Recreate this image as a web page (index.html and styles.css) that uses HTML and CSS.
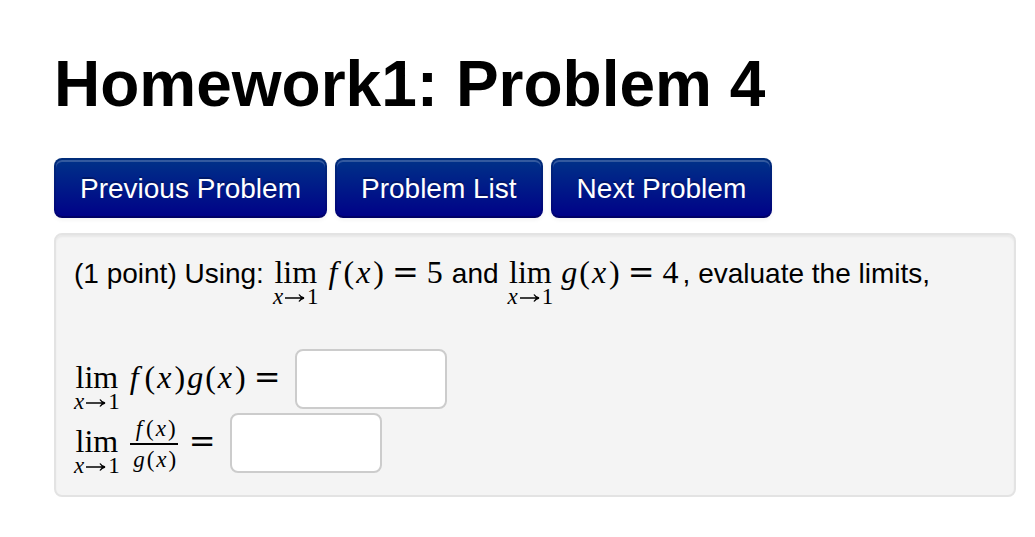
FILE: index.html
```html
<!DOCTYPE html>
<html lang="en">
<head>
<meta charset="utf-8">
<title>Homework1: Problem 4</title>
<link rel="stylesheet" href="styles.css">
</head>
<body>
<svg width="0" height="0" class="defs" aria-hidden="true">
  <symbol id="arrow" viewBox="0 0 20 12">
    <path d="M0 6H18M14 2.5Q15.5 5.2 19 6Q15.500 6.800 14 9.500" fill="none" stroke="#000" stroke-width="1.400"/>
  </symbol>
</svg>
<main class="page">
  <h1 class="title">Homework1: Problem 4</h1>
  <nav class="nav">
    <a class="btn" href="#previous">Previous Problem</a>
    <a class="btn" href="#list">Problem List</a>
    <a class="btn" href="#next">Next Problem</a>
  </nav>
  <form class="problem">
    <p class="row statement">
      <span class="text">(1 point) Using:</span>
      <span class="math"><span class="lim"><span>lim</span><span class="under"><i>x</i><svg class="arrow" role="img" aria-label="to"><use href="#arrow"/></svg>1</span></span><i class="f">f</i>(<i class="x">x</i>)<span class="eq">=</span>5</span>
      <span class="text">and</span>
      <span class="math"><span class="lim"><span>lim</span><span class="under"><i>x</i><svg class="arrow" role="img" aria-label="to"><use href="#arrow"/></svg>1</span></span><i class="g">g</i>(<i class="x">x</i>)<span class="eq">=</span>4</span><span class="text comma">, evaluate the limits,</span>
    </p>
    <div class="row">
      <label class="math" for="product"><span class="lim"><span>lim</span><span class="under"><i>x</i><svg class="arrow" role="img" aria-label="to"><use href="#arrow"/></svg>1</span></span><i class="f">f</i>(<i class="x">x</i>)<i class="g">g</i>(<i class="x">x</i>)<span class="eq">=</span></label>
      <input class="answer" id="product" type="text">
    </div>
    <div class="row">
      <label class="math" for="quotient"><span class="lim"><span>lim</span><span class="under"><i>x</i><svg class="arrow" role="img" aria-label="to"><use href="#arrow"/></svg>1</span></span><span class="frac"><span class="num"><i class="f">f</i>(<i class="x">x</i>)</span><span class="den"><i class="g">g</i>(<i class="x">x</i>)</span></span><span class="eq">=</span></label>
      <input class="answer" id="quotient" type="text">
    </div>
  </form>
</main>
</body>
</html>
```
FILE: styles.css
```css
* { box-sizing: border-box; }

body {
  margin: 0;
  background: #fff;
  color: #000;
  font: 28px/40px "Liberation Sans", Arial, sans-serif;
}

.defs { display: none; }

.page { padding: 44px 19px 40px 54px; }

.title {
  margin: 0 0 34px;
  font-size: 64px;
  line-height: 80px;
  font-weight: bold;
}

.nav {
  display: flex;
  flex-wrap: wrap;
  gap: 8px;
  margin-bottom: 15px;
}

.btn {
  padding: 9px 24px 7px;
  border: 2px solid;
  border-color: rgba(0, 0, 0, .1) rgba(0, 0, 0, .1) rgba(0, 0, 0, .25);
  border-radius: 8px;
  background: linear-gradient(#003388, #000088) border-box;
  box-shadow: inset 0 2px 0 rgba(255, 255, 255, .2), 0 2px 4px rgba(0, 0, 0, .05);
  color: #fff;
  text-decoration: none;
  text-shadow: 0 -2px 0 rgba(0, 0, 0, .25);
}

.problem {
  padding: 19px 18px 18px;
  border: 2px solid #e3e3e3;
  border-radius: 8px;
  background: #f4f4f4;
  box-shadow: inset 0 2px 2px rgba(0, 0, 0, .05);
}

.row {
  display: flex;
  align-items: baseline;
  margin: 0;
}

.statement {
  gap: 0 9px;
  margin-bottom: 41px;
}

.comma { margin-left: -5px; }

.math {
  display: inline-flex;
  align-items: baseline;
  font-family: "Liberation Serif", "Times New Roman", serif;
  font-size: 32px;
  line-height: 28px;
}

.lim {
  display: inline-flex;
  flex-direction: column;
  align-items: center;
}

.under {
  font-size: 23px;
  line-height: 22px;
}

.arrow {
  width: 20px;
  height: 12px;
  margin: 0 2px;
}

.f { margin: 0 6px 0 10px; }
.g { margin: 0 2px; }
.x { margin: 0 3px 0 2px; }
.lim + .g { margin-left: 8px; }

.eq {
  margin: 0 8px;
  font-family: "DejaVu Serif", serif;
}

.frac {
  display: inline-flex;
  flex-direction: column;
  align-self: flex-start;
  margin: -12px 3px 0 10px;
  font-size: 23px;
  text-align: center;
}

.num { border-bottom: 2px solid #000; padding-right: 2px; }
.num .f { margin: 0 4px 0 6px; }
.frac .x { margin: 0 2px; }
.den { line-height: 30px; }

.answer {
  width: 152px;
  height: 60px;
  padding: 8px 12px;
  border: 2px solid #ccc;
  border-radius: 8px;
  background: #fff;
  font: inherit;
  margin-left: 7px;
}
```
